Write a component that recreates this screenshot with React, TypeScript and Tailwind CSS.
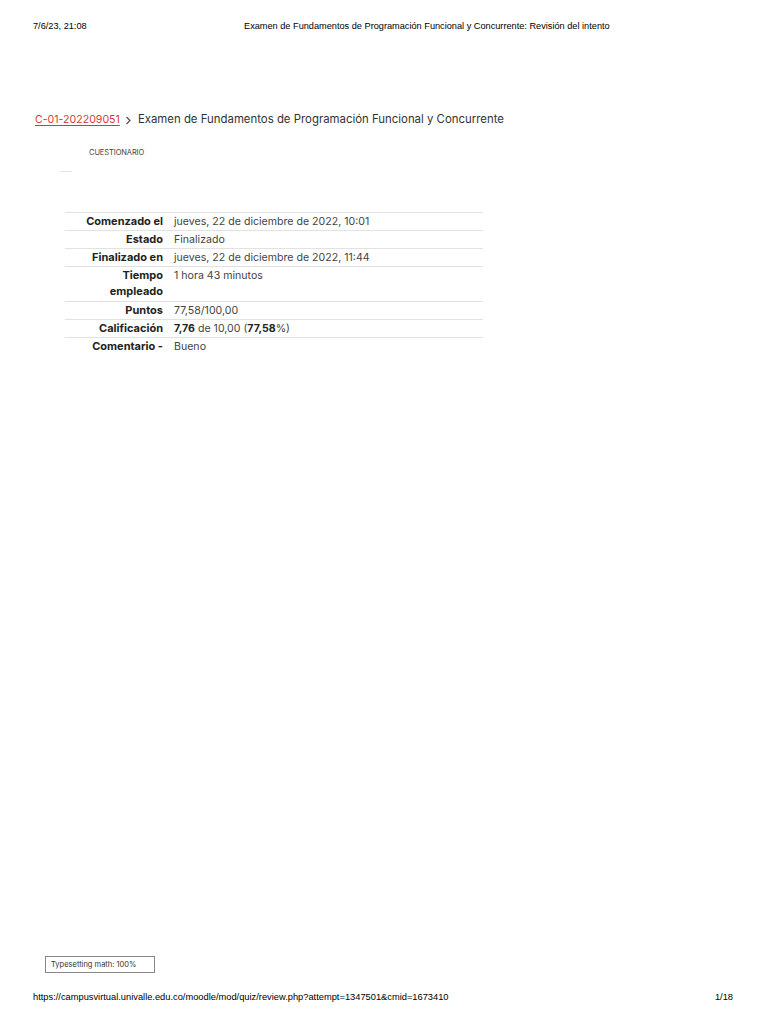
import React from "react";

const rows: { label: React.ReactNode; value: React.ReactNode; tall?: boolean }[] = [
  { label: "Comenzado el", value: "jueves, 22 de diciembre de 2022, 10:01" },
  { label: "Estado", value: "Finalizado" },
  { label: "Finalizado en", value: "jueves, 22 de diciembre de 2022, 11:44" },
  { label: (<>Tiempo<br />empleado</>), value: "1 hora 43 minutos", tall: true },
  { label: "Puntos", value: "77,58/100,00" },
  {
    label: "Calificación",
    value: (
      <>
        <b className="font-bold text-[#222]">7,76</b> de 10,00 (<b className="font-bold text-[#222]">77,58</b>%)
      </>
    ),
  },
  { label: "Comentario -", value: "Bueno" },
];

export default function App() {
  return (
    <div className="w-[768px] h-[1024px] bg-white relative overflow-hidden flex flex-col" style={{ fontFamily: "Inter, 'Noto Sans', sans-serif" }}>
      {/* print header */}
      <div className="h-[50px] flex items-start pt-[20px] px-[33px] text-[9.2px] text-black" style={{ fontFamily: "'Liberation Sans', Arial, sans-serif" }}>
        <span className="w-[211px] shrink-0">7/6/23, 21:08</span>
        <span>Examen de Fundamentos de Programación Funcional y Concurrente: Revisión del intento</span>
      </div>

      {/* breadcrumb */}
      <div className="mt-[61px] pl-[35px] flex items-center h-[18px]">
        <span className="text-[10.6px] text-[#d43a3a] underline underline-offset-2 decoration-[#d43a3a]">C-01-202209051</span>
        <svg className="ml-[5px] mr-[6px]" width="7" height="9" viewBox="0 0 7 9">
          <path d="M1.5 1 L5 4.5 L1.5 8" stroke="#555" strokeWidth="1.3" fill="none" />
        </svg>
        <span className="text-[11.4px] text-[#333]">Examen de Fundamentos de Programación Funcional y Concurrente</span>
      </div>

      {/* cuestionario */}
      <div className="mt-[18px] pl-[89px] text-[7.5px] text-[#444] tracking-[-0.1px]">CUESTIONARIO</div>
      <div className="ml-[60px] mt-[13px] w-[12px] h-px bg-[#e4e4e4]" />

      {/* summary table */}
      <div className="ml-[65px] mt-[40px] w-[418px] border-t border-[#e2e2e2]">
        {rows.map((r, i) => (
          <div
            key={i}
            className={`flex items-baseline ${i < rows.length - 1 ? "border-b border-[#e2e2e2]" : ""} ${r.tall ? "h-[35px]" : "h-[18px]"}`}
          >
            <div className="w-[98px] shrink-0 text-right font-bold text-[#222] text-[11px] leading-[16px]">{r.label}</div>
            <div className="pl-[11px] text-[#444] text-[10.6px] leading-[16px]">{r.value}</div>
          </div>
        ))}
      </div>

      <div className="flex-1" />

      {/* typesetting box */}
      <div className="ml-[45px] mb-[18px] w-[110px] h-[17px] border border-[#888] flex items-center pl-[5px] text-[7.5px] text-[#333]">
        Typesetting math: 100%
      </div>

      {/* print footer */}
      <div className="h-[33px] px-[33px] flex items-start text-[9.3px] text-black" style={{ fontFamily: "'Liberation Sans', Arial, sans-serif" }}>
        <span className="flex-1">https://campusvirtual.univalle.edu.co/moodle/mod/quiz/review.php?attempt=1347501&amp;cmid=1673410</span>
        <span className="mr-[2px]">1/18</span>
      </div>
    </div>
  );
}
